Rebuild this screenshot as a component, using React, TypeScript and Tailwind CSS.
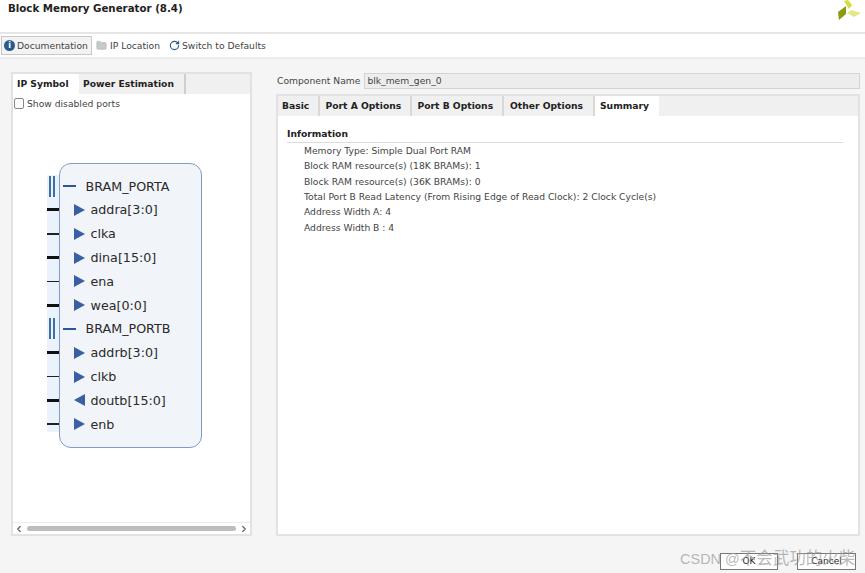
import { ChevronLeft, ChevronRight, Folder, RotateCw } from "lucide-react";

const tabsRight = ["Basic", "Port A Options", "Port B Options", "Other Options"];

const info = [
  "Memory Type: Simple Dual Port RAM",
  "Block RAM resource(s) (18K BRAMs): 1",
  "Block RAM resource(s) (36K BRAMs): 0",
  "Total Port B Read Latency (From Rising Edge of Read Clock): 2 Clock Cycle(s)",
  "Address Width A: 4",
  "Address Width B : 4",
];

type Pin = { name: string; kind: "bus" | "in" | "out"; thick?: boolean };

const pins: Pin[] = [
  { name: "BRAM_PORTA", kind: "bus" },
  { name: "addra[3:0]", kind: "in", thick: true },
  { name: "clka", kind: "in" },
  { name: "dina[15:0]", kind: "in", thick: true },
  { name: "ena", kind: "in" },
  { name: "wea[0:0]", kind: "in", thick: true },
  { name: "BRAM_PORTB", kind: "bus" },
  { name: "addrb[3:0]", kind: "in", thick: true },
  { name: "clkb", kind: "in" },
  { name: "doutb[15:0]", kind: "out", thick: true },
  { name: "enb", kind: "in" },
];

function PinRow({ pin }: { pin: Pin }) {
  if (pin.kind === "bus") {
    return (
      <div className="flex h-[23.8px] items-center">
        <div className="flex h-[21px] w-3 gap-[2px] pl-[2px]">
          <div className="w-[2px] bg-[#3f6f9f]" />
          <div className="w-[2px] bg-[#3f6f9f]" />
        </div>
        <div className="ml-[4px] h-[2px] w-[13px] bg-[#2f5597]" />
        <span className="ml-[10px] text-[12.7px] text-[#2a2a2a]">{pin.name}</span>
      </div>
    );
  }
  return (
    <div className="flex h-[23.8px] items-center">
      <div className={pin.thick ? "h-[3px] w-3 bg-[#111]" : "h-[1.5px] w-3 bg-[#222]"} />
      <svg width="11" height="12" viewBox="0 0 11 12" className="ml-[15px]">
        <path d={pin.kind === "in" ? "M0 0 L11 6 L0 12 Z" : "M11 0 L0 6 L11 12 Z"} fill="#3a5fa5" />
      </svg>
      <span className="ml-[6px] text-[12.7px] text-[#2a2a2a]">{pin.name}</span>
    </div>
  );
}

export default function App() {
  return (
    <div className="relative flex h-[573px] w-[865px] flex-col overflow-hidden bg-[#f5f5f5] font-['DejaVu_Sans',sans-serif] text-[9.2px] text-[#444]">
      {/* title */}
      <div className="flex h-[34px] justify-between border-b-2 border-[#e6e6e6] bg-white pl-2 pr-[4px]">
        <span className="mt-[1px] text-[10.25px] font-bold text-[#222]">Block Memory Generator (8.4)</span>
        <svg width="24" height="21" viewBox="0 0 24 21">
          <path d="M7 1 L11 0 L15 5 L12 9 Z" fill="#d8dc3a" />
          <path d="M10 13 L15 10 L24 13 L17 17 Z" fill="#e3e88a" />
          <path d="M1 12 L9 6 L9 14 L2 20 Z" fill="#8c9a10" />
        </svg>
      </div>

      {/* toolbar */}
      <div className="flex h-[25px] items-center border-b-2 border-[#ececec] bg-white pl-[1px]">
        <div className="flex h-[19px] w-[91px] items-center gap-[2px] border border-[#c8c8c8] bg-[#f3f3f3] pl-[2px]">
          <div className="flex h-[11px] w-[11px] shrink-0 items-center justify-center rounded-full bg-[#2d5a8e] text-[8px] font-bold text-white">i</div>
          <span>Documentation</span>
        </div>
        <div className="ml-[4px] flex items-center gap-[3px]">
          <Folder size={11} fill="#c9c9c9" stroke="#bdbdbd" />
          <span>IP Location</span>
        </div>
        <div className="ml-[9px] flex items-center gap-[2px]">
          <RotateCw size={11} stroke="#2d5a8e" strokeWidth={2.5} />
          <span>Switch to Defaults</span>
        </div>
      </div>

      {/* body */}
      <div className="flex h-[477px] pl-[11px] pr-[5px] pt-[13px]">
        <div className="flex w-[241px] flex-col border-2 border-[#e2e2e2] bg-white">
          <div className="flex h-[20px] bg-[#f0f0f0] font-bold text-[#222]">
            <div className="flex w-[66px] items-center bg-white pl-[4px]">IP Symbol</div>
            <div className="flex w-[107px] items-center border-r-2 border-[#cfcfcf] pl-[4px]">Power Estimation</div>
          </div>
          <div className="mt-[3px] flex items-center gap-[3px] pl-[1px]">
            <div className="h-[11px] w-[10px] rounded-[2px] border border-[#888] bg-white" />
            <span>Show disabled ports</span>
          </div>
          <div className="mt-[52px] flex h-[285px] items-start pl-[33.5px]">
            <div className="mt-[12px] h-[257px] w-3 shrink-0 bg-[#eaf3fc]" />
            <div className="h-[285px] w-[143px] shrink-0 rounded-[12px] border border-[#7f9cc6] bg-[#f1f4f9]">
              <div className="-ml-[13px] mt-[10.5px] flex flex-col">
                {pins.map((p) => (
                  <PinRow key={p.name} pin={p} />
                ))}
              </div>
            </div>
          </div>
          <div className="mt-auto flex h-[12px] items-center border-t border-[#ececec] px-[1px]">
            <ChevronLeft size={10} strokeWidth={3} className="text-[#666]" />
            <div className="mx-[3px] h-[5px] flex-1 rounded-full bg-[#bdbdbd]" />
            <ChevronRight size={10} strokeWidth={3} className="text-[#666]" />
          </div>
        </div>

        <div className="ml-[24px] flex flex-1 flex-col">
          <div className="flex h-[17px] items-center gap-[4px] pl-[1px]">
            <span>Component Name</span>
            <div className="flex h-[16px] flex-1 items-center border border-[#d4d4d4] bg-[#ededed] pl-[2px]">blk_mem_gen_0</div>
          </div>
          <div className="mt-[5px] flex flex-1 flex-col border-2 border-[#e2e2e2] bg-white">
            <div className="flex h-[20px] bg-[#f0f0f0] font-bold text-[#222]">
              {tabsRight.map((t, i) => (
                <div
                  key={t}
                  className={`flex items-center border-r-2 border-[#d8d8d8] ${
                    i === 0 ? "w-[42px] pl-[4px]" : i === 3 ? "w-[91px] pl-[6px]" : "w-[92px] pl-[5.5px]"
                  }`}
                >
                  {t}
                </div>
              ))}
              <div className="flex w-[64px] items-center bg-white pl-[5px]">Summary</div>
            </div>
            <div className="pl-[9px] pr-[15px] pt-[11px]">
              <div className="border-b border-[#dcdcdc] pb-[1px] font-bold text-[#222]">Information</div>
              <div className="flex flex-col pl-[17px] text-[#444]">
                {info.map((line) => (
                  <div key={line} className="h-[15.4px] leading-[15px]">
                    {line}
                  </div>
                ))}
              </div>
            </div>
          </div>
        </div>
      </div>

      {/* bottom buttons */}
      <div className="flex justify-end gap-[19px] pr-[9px] pt-[17px]">
        <div className="flex h-[17px] w-[58px] items-center justify-center border border-[#777] bg-white text-[9px] text-[#222]">OK</div>
        <div className="flex h-[17px] w-[59px] items-center justify-center border border-[#777] bg-white text-[9px] text-[#222]">Cancel</div>
      </div>

      <span className="absolute left-[680px] top-[546px] font-['Liberation_Sans','Noto_Sans_CJK_SC',sans-serif] text-[14.5px] text-[#999]/70">
        CSDN @<span className="text-[16.5px]">不会武功的火柴</span>
      </span>
    </div>
  );
}
